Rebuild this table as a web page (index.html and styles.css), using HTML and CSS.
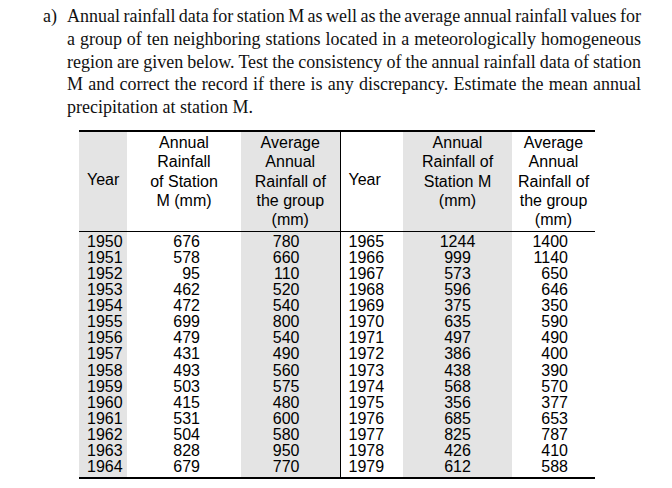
FILE: index.html
```html
<!DOCTYPE html>
<html lang="en">
<head>
<meta charset="utf-8">
<title>Annual rainfall data</title>
<link rel="stylesheet" href="styles.css">
</head>
<body>
<div class="question">
  <div class="label">a)</div>
  <div class="text">
    <span class="line tight">Annual rainfall data for station M as well as the average annual rainfall values for</span>
    <span class="line">a group of ten neighboring stations located in a meteorologically homogeneous</span>
    <span class="line tight">region are given below. Test the consistency of the annual rainfall data of station</span>
    <span class="line">M and correct the record if there is any discrepancy. Estimate the mean annual</span>
    <span class="line last">precipitation at station M.</span>
  </div>
</div>
<table class="data">
  <colgroup>
    <col class="w1"><col class="w2"><col class="w3"><col class="w4"><col class="w5"><col class="w6">
  </colgroup>
  <thead>
    <tr>
      <th class="c1 shade year">Year</th>
      <th class="c2">Annual<br>Rainfall<br>of Station<br>M (mm)</th>
      <th class="c3 shade">Average<br>Annual<br>Rainfall of<br>the group<br>(mm)</th>
      <th class="c4 year split">Year</th>
      <th class="c5 shade">Annual<br>Rainfall of<br>Station M<br>(mm)</th>
      <th class="c6">Average<br>Annual<br>Rainfall of<br>the group<br>(mm)</th>
    </tr>
  </thead>
  <tbody>
    <tr class="start"><td class="c1 shade">1950</td><td class="c2">676</td><td class="c3 shade">780</td><td class="c4 split">1965</td><td class="c5 shade">1244</td><td class="c6">1400</td></tr>
    <tr><td class="c1 shade">1951</td><td class="c2">578</td><td class="c3 shade">660</td><td class="c4 split">1966</td><td class="c5 shade">999</td><td class="c6">1140</td></tr>
    <tr><td class="c1 shade">1952</td><td class="c2">95</td><td class="c3 shade">110</td><td class="c4 split">1967</td><td class="c5 shade">573</td><td class="c6">650</td></tr>
    <tr><td class="c1 shade">1953</td><td class="c2">462</td><td class="c3 shade">520</td><td class="c4 split">1968</td><td class="c5 shade">596</td><td class="c6">646</td></tr>
    <tr><td class="c1 shade">1954</td><td class="c2">472</td><td class="c3 shade">540</td><td class="c4 split">1969</td><td class="c5 shade">375</td><td class="c6">350</td></tr>
    <tr><td class="c1 shade">1955</td><td class="c2">699</td><td class="c3 shade">800</td><td class="c4 split">1970</td><td class="c5 shade">635</td><td class="c6">590</td></tr>
    <tr><td class="c1 shade">1956</td><td class="c2">479</td><td class="c3 shade">540</td><td class="c4 split">1971</td><td class="c5 shade">497</td><td class="c6">490</td></tr>
    <tr><td class="c1 shade">1957</td><td class="c2">431</td><td class="c3 shade">490</td><td class="c4 split">1972</td><td class="c5 shade">386</td><td class="c6">400</td></tr>
    <tr><td class="c1 shade">1958</td><td class="c2">493</td><td class="c3 shade">560</td><td class="c4 split">1973</td><td class="c5 shade">438</td><td class="c6">390</td></tr>
    <tr><td class="c1 shade">1959</td><td class="c2">503</td><td class="c3 shade">575</td><td class="c4 split">1974</td><td class="c5 shade">568</td><td class="c6">570</td></tr>
    <tr><td class="c1 shade">1960</td><td class="c2">415</td><td class="c3 shade">480</td><td class="c4 split">1975</td><td class="c5 shade">356</td><td class="c6">377</td></tr>
    <tr><td class="c1 shade">1961</td><td class="c2">531</td><td class="c3 shade">600</td><td class="c4 split">1976</td><td class="c5 shade">685</td><td class="c6">653</td></tr>
    <tr><td class="c1 shade">1962</td><td class="c2">504</td><td class="c3 shade">580</td><td class="c4 split">1977</td><td class="c5 shade">825</td><td class="c6">787</td></tr>
    <tr><td class="c1 shade">1963</td><td class="c2">828</td><td class="c3 shade">950</td><td class="c4 split">1978</td><td class="c5 shade">426</td><td class="c6">410</td></tr>
    <tr class="end"><td class="c1 shade">1964</td><td class="c2">679</td><td class="c3 shade">770</td><td class="c4 split">1979</td><td class="c5 shade">612</td><td class="c6">588</td></tr>
  </tbody>
</table>
</body>
</html>
```

FILE: styles.css
```css
html, body {
  margin: 0;
  padding: 0;
  background: #ffffff;
  color: #000000;
}

.question {
  display: flex;
  margin: 5px 0 0 43px;
  font-family: "Liberation Serif", "Times New Roman", serif;
  font-size: 18px;
  line-height: 22.75px;
  color: #111111;
}

.label {
  width: 24px;
  flex: none;
}

.text {
  width: 574px;
  flex: none;
}

.line {
  display: block;
  text-align: justify;
  text-align-last: justify;
}

.line.tight {
  word-spacing: -3px;
}

.line.last {
  text-align: left;
  text-align-last: left;
}

.data {
  margin: 11px 0 0 79px;
  width: 516px;
  table-layout: fixed;
  border-collapse: collapse;
  border-top: 2px solid #000;
  border-bottom: 2px solid #000;
  font-family: "Liberation Sans", Arial, sans-serif;
  font-size: 16px;
  color: #000;
}

.w1 { width: 48px; }
.w2 { width: 114px; }
.w3 { width: 99px; }
.w4 { width: 63px; }
.w5 { width: 109px; }
.w6 { width: 83px; }

.data th {
  font-weight: normal;
  vertical-align: top;
  text-align: center;
  line-height: 19.4px;
  padding: 1px 0 1px 0;
  border-bottom: 1px solid #000;
}

.data th.year {
  vertical-align: middle;
  text-align: left;
  padding: 0 0 4px 8px;
}

.data td {
  line-height: 16.1px;
  padding: 0;
}

.data tr.start td {
  padding-top: 2px;
}

.data tr.end td {
  padding-bottom: 2px;
}

.shade {
  background: #e4e4e4;
}

.split {
  border-left: 1px solid #000;
}

.data td.c1 { text-align: left; padding-left: 8px; }
.data td.c2 { text-align: right; padding-right: 41px; }
.data td.c3 { text-align: right; padding-right: 40px; }
.data td.c4 { text-align: left; padding-left: 8px; }
.data td.c5 { text-align: center; }
.data td.c6 { text-align: right; padding-right: 27px; }
```
